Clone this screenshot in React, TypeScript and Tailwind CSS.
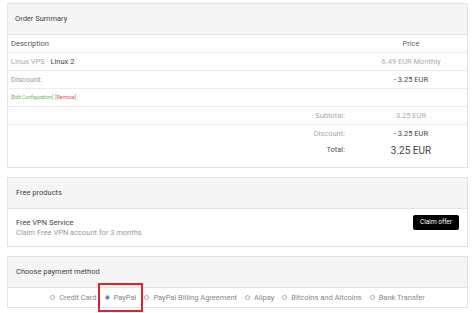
import React from "react";

function Radio({ label, checked }: { label: string; checked?: boolean }) {
  return (
    <span className="flex items-center gap-[4px]">
      {checked ? (
        <span className="w-[5px] h-[5px] rounded-full border border-[#9bb8e8] bg-white flex items-center justify-center">
          <span className="w-[3px] h-[3px] rounded-full bg-[#2a6fe0]" />
        </span>
      ) : (
        <span className="w-[5px] h-[5px] rounded-full border border-[#aaa] bg-white" />
      )}
      <span>{label}</span>
    </span>
  );
}

export default function App() {
  return (
    <div
      className="w-[474px] h-[313px] bg-white overflow-hidden pt-[3px] pl-[7px] pr-[6px] text-[#555] relative font-normal"
      style={{ fontFamily: "Roboto, 'Liberation Sans', sans-serif" }}
    >
      {/* Order Summary */}
      <div className="border border-[#e3e3e3]">
        <div className="h-[31px] bg-[#f5f5f5] border-b border-[#e3e3e3] flex items-center pl-[7px] text-[7.5px] text-[#444]">
          Order Summary
        </div>
        <div className="text-[7.5px]">
          <div className="h-[18px] border-b border-[#ececec] flex items-center">
            <div className="flex-1 pl-[3px] text-[#555]">Description</div>
            <div className="w-[112px] text-center text-[#666]">Price</div>
          </div>
          <div className="h-[18px] border-b border-[#ececec] flex items-center">
            <div className="flex-1 pl-[3px] text-[#aaa]">
              Linux VPS - <span className="text-[#444]">Linux 2</span>
            </div>
            <div className="w-[112px] text-center text-[#aaa]">6.49 EUR Monthly</div>
          </div>
          <div className="h-[18px] border-b border-[#ececec] flex items-center">
            <div className="flex-1 pl-[3px] text-[#999]">Discount:</div>
            <div className="w-[112px] text-center text-[#444]">- 3.25 EUR</div>
          </div>
          <div className="h-[18px] border-b border-[#ececec] flex items-center">
            <div className="flex-1 pl-[3px] text-[5px] flex gap-[2px]">
              <span className="text-[#5cb85c]">[Edit Configuration]</span>
              <span className="text-[#d9534f]">[Remove]</span>
            </div>
          </div>
          <div className="h-[18px] border-b border-[#ececec] flex items-center">
            <div className="flex-1 text-right pr-[10px] text-[#aaa]">Subtotal:</div>
            <div className="w-[112px] text-center text-[#aaa]">3.25 EUR</div>
          </div>
          <div className="h-[18px] flex items-center">
            <div className="flex-1 text-right pr-[10px] text-[#aaa]">Discount:</div>
            <div className="w-[112px] text-center text-[#444]">- 3.25 EUR</div>
          </div>
          <div className="h-[14px] flex items-center">
            <div className="flex-1 text-right pr-[10px] text-[#555]">Total:</div>
            <div className="w-[112px] text-center text-[10px] text-[#444]">3.25 EUR</div>
          </div>
          <div className="h-[10px]" />
        </div>
      </div>

      {/* Free products */}
      <div className="border border-[#e3e3e3] mt-[9px]">
        <div className="h-[31px] bg-[#f5f5f5] border-b border-[#e3e3e3] flex items-center pl-[8px] text-[7.5px] text-[#444]">
          Free products
        </div>
        <div className="h-[37px] flex items-center justify-between pl-[8px] pr-[8px] text-[7.5px]">
          <div className="flex flex-col leading-[10px]">
            <span className="text-[#444]">Free VPN Service</span>
            <span className="text-[#999]">Claim Free VPN account for 3 months</span>
          </div>
          <div className="bg-black text-white rounded-[2px] h-[15px] w-[46px] flex items-center justify-center text-[6.5px] -mt-[10px]">
            Claim offer
          </div>
        </div>
      </div>

      {/* Payment method */}
      <div className="border border-[#e3e3e3] mt-[9px]">
        <div className="h-[31px] bg-[#f5f5f5] border-b border-[#e3e3e3] flex items-center pl-[8px] text-[7.5px] text-[#444]">
          Choose payment method
        </div>
        <div className="h-[19px] flex items-center justify-center gap-[8px] text-[7.5px] text-[#888]">
          <Radio label="Credit Card" />
          <Radio label="PayPal" checked />
          <Radio label="PayPal Billing Agreement" />
          <Radio label="Alipay" />
          <Radio label="Bitcoins and Altcoins" />
          <Radio label="Bank Transfer" />
        </div>
      </div>

      <div className="absolute left-[98px] top-[283px] w-[45px] h-[29px] border-2 border-[#e0202a]" />
    </div>
  );
}
